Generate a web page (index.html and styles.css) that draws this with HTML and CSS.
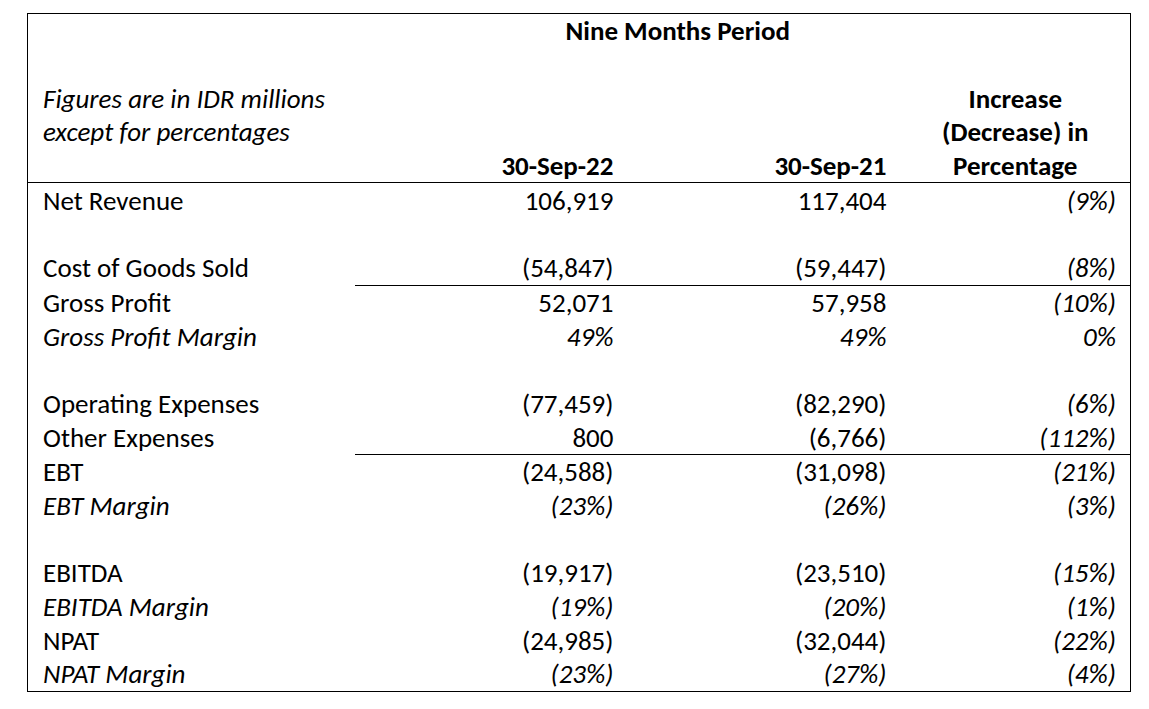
FILE: index.html
```html
<!DOCTYPE html>
<html>
<head>
<meta charset="utf-8">
<link rel="stylesheet" href="styles.css">
</head>
<body>
<table class="fin">
  <colgroup>
    <col class="c-label">
    <col class="c-num">
    <col class="c-num">
    <col class="c-pct">
  </colgroup>
  <thead>
    <tr><td></td><td colspan="3" class="period">Nine Months Period</td></tr>
    <tr><td></td><td></td><td></td><td></td></tr>
    <tr><td class="note">Figures are in IDR millions</td><td></td><td></td><td class="hc">Increase</td></tr>
    <tr><td class="note">except for percentages</td><td></td><td></td><td class="hc">(Decrease) in</td></tr>
    <tr class="hdr-last"><td></td><td class="hr">30-Sep-22</td><td class="hr">30-Sep-21</td><td class="hc">Percentage</td></tr>
  </thead>
  <tbody>
    <tr><td class="lbl">Net Revenue</td><td class="num">106,919</td><td class="num">117,404</td><td class="num it">(9%)</td></tr>
    <tr><td></td><td></td><td></td><td></td></tr>
    <tr class="underline"><td class="lbl">Cost of Goods Sold</td><td class="num">(54,847)</td><td class="num">(59,447)</td><td class="num it">(8%)</td></tr>
    <tr><td class="lbl">Gross Profit</td><td class="num">52,071</td><td class="num">57,958</td><td class="num it">(10%)</td></tr>
    <tr class="it"><td class="lbl">Gross Profit Margin</td><td class="num">49%</td><td class="num">49%</td><td class="num">0%</td></tr>
    <tr><td></td><td></td><td></td><td></td></tr>
    <tr><td class="lbl">Operating Expenses</td><td class="num">(77,459)</td><td class="num">(82,290)</td><td class="num it">(6%)</td></tr>
    <tr class="underline"><td class="lbl">Other Expenses</td><td class="num">800</td><td class="num">(6,766)</td><td class="num it">(112%)</td></tr>
    <tr><td class="lbl">EBT</td><td class="num">(24,588)</td><td class="num">(31,098)</td><td class="num it">(21%)</td></tr>
    <tr class="it"><td class="lbl">EBT Margin</td><td class="num">(23%)</td><td class="num">(26%)</td><td class="num">(3%)</td></tr>
    <tr><td></td><td></td><td></td><td></td></tr>
    <tr><td class="lbl">EBITDA</td><td class="num">(19,917)</td><td class="num">(23,510)</td><td class="num it">(15%)</td></tr>
    <tr class="it"><td class="lbl">EBITDA Margin</td><td class="num">(19%)</td><td class="num">(20%)</td><td class="num">(1%)</td></tr>
    <tr><td class="lbl">NPAT</td><td class="num">(24,985)</td><td class="num">(32,044)</td><td class="num it">(22%)</td></tr>
    <tr class="it"><td class="lbl">NPAT Margin</td><td class="num">(23%)</td><td class="num">(27%)</td><td class="num">(4%)</td></tr>
  </tbody>
</table>
</body>
</html>
```

FILE: styles.css
```css
html, body {
  margin: 0;
  padding: 0;
  background: #ffffff;
}
body {
  padding: 13px 0 0 27px;
  font-family: Carlito, Lato, "Liberation Sans", sans-serif;
  font-size: 27px;
  color: #000;
}
.fin {
  border-collapse: collapse;
  table-layout: fixed;
  width: 1103px;
  border: 1px solid #000;
}
.c-label { width: 327px; }
.c-num { width: 273px; }
.c-pct { width: 230px; }
.fin td {
  height: 33.7px;
  padding: 0 14px 0 15px;
  white-space: nowrap;
  vertical-align: middle;
  line-height: 1;
}
.period {
  font-weight: bold;
  text-align: left;
  padding-left: 211px !important;
}
.note { font-style: italic; }
.hc { font-weight: bold; text-align: center; padding: 0 !important; }
.hr { font-weight: bold; text-align: right; }
.hdr-last td { border-bottom: 1px solid #000; }
.num { text-align: right; }
.it { font-style: italic; }
.underline td + td { border-bottom: 1px solid #000; }
```
